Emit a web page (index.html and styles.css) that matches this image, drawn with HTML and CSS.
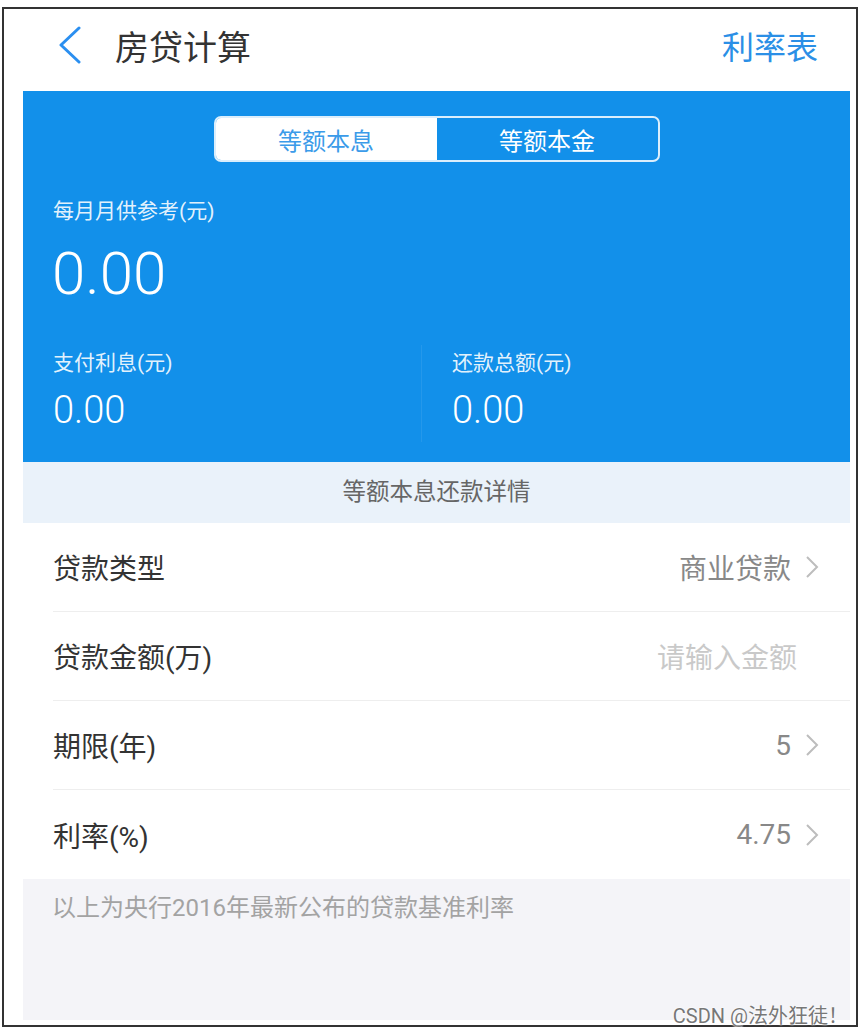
FILE: index.html
```html
<!DOCTYPE html>
<html>
	<head>
		<meta charset="UTF-8">
		<title>房贷计算</title>
		<link rel="stylesheet" href="styles.css">
	</head>
	<body>
		<div class="phone">
			<div class="page">
				<div class="header">
					<a href="#" class="back">
						<svg width="24" height="38" viewBox="0 0 24 38"><polyline points="21,2 3,19 21,36" fill="none" stroke="#2b8ff0" stroke-width="3" stroke-linecap="round" stroke-linejoin="round"/></svg>
					</a>
					<div class="title">房贷计算</div>
					<a href="#" class="rate-link">利率表</a>
				</div>

				<div class="result">
					<div class="tabs">
						<a href="#" class="tab active">等额本息</a>
						<a href="#" class="tab">等额本金</a>
					</div>
					<div class="label">每月月供参考(元)</div>
					<div class="big-num">0.00</div>
					<div class="stats">
						<div class="stat stat-left">
							<div class="label">支付利息(元)</div>
							<div class="num">0.00</div>
						</div>
						<div class="stat stat-right">
							<div class="label">还款总额(元)</div>
							<div class="num">0.00</div>
						</div>
					</div>
				</div>

				<div class="detail">等额本息还款详情</div>

				<ul class="form">
					<li class="row">
						<span class="row-name">贷款类型</span>
						<span class="row-value">商业贷款</span>
						<svg class="arrow" width="14" height="24" viewBox="0 0 14 24"><polyline points="2,2 12,12 2,22" fill="none" stroke="#bdbdbd" stroke-width="2"/></svg>
					</li>
					<li class="row">
						<span class="row-name">贷款金额(万)</span>
						<span class="row-value placeholder">请输入金额</span>
					</li>
					<li class="row">
						<span class="row-name">期限(年)</span>
						<span class="row-value">5</span>
						<svg class="arrow" width="14" height="24" viewBox="0 0 14 24"><polyline points="2,2 12,12 2,22" fill="none" stroke="#bdbdbd" stroke-width="2"/></svg>
					</li>
					<li class="row">
						<span class="row-name">利率(%)</span>
						<span class="row-value">4.75</span>
						<svg class="arrow" width="14" height="24" viewBox="0 0 14 24"><polyline points="2,2 12,12 2,22" fill="none" stroke="#bdbdbd" stroke-width="2"/></svg>
					</li>
				</ul>

				<div class="tip">以上为央行2016年最新公布的贷款基准利率</div>
			</div>
			<div class="mark">CSDN @法外狂徒！</div>
		</div>
	</body>
</html>
```

FILE: styles.css
```css
*{
	padding: 0;
	margin: 0;
	box-sizing: border-box;
}
body{
	font-family: Roboto, "Noto Sans CJK SC", sans-serif;
	background: #fff;
}
a{
	text-decoration: none;
}
.phone{
	position: relative;
	width: 856px;
	height: 1020px;
	margin: 7px 0 0 2px;
	border: 2px solid #333;
	padding: 0 6px 5px 19px;
	background: #fff;
}
.page{
	display: flex;
	flex-direction: column;
	height: 100%;
}
.header{
	height: 82px;
	display: flex;
	align-items: center;
	padding: 0 32px 10px 35px;
}
.back{
	display: flex;
	width: 24px;
}
.title{
	margin-left: 33px;
	font-size: 34px;
	color: #333;
	flex: 1;
}
.rate-link{
	font-size: 32px;
	color: #2b8fe6;
}
.result{
	background: #1290ea;
	color: #fff;
	padding: 25px 0 20px;
}
.tabs{
	display: flex;
	width: 446px;
	height: 46px;
	margin: 0 auto;
	border: 2px solid rgba(255,255,255,0.85);
	border-radius: 7px;
	overflow: hidden;
}
.tab{
	flex: 1;
	display: flex;
	align-items: center;
	justify-content: center;
	font-size: 24px;
	color: #fff;
}
.tab.active{
	background: #fff;
	color: #3b9be9;
}
.result .label{
	font-size: 21px;
	line-height: 28px;
	color: rgba(255,255,255,0.9);
}
.result > .label{
	margin: 35px 0 0 30px;
}
.big-num{
	margin: 20px 0 0 29px;
	font-size: 60px;
	line-height: 58px;
	font-weight: 300;
}
.stats{
	display: flex;
	margin-top: 42px;
}
.stat{
	padding: 4px 0 13px;
}
.stat-left{
	width: 399px;
	padding-left: 30px;
	border-right: 1px solid rgba(255,255,255,0.08);
}
.stat-right{
	flex: 1;
	padding-left: 30px;
}
.num{
	margin-top: 14px;
	font-size: 38px;
	line-height: 38px;
	font-weight: 300;
}
.detail{
	height: 61px;
	line-height: 61px;
	background: #eaf2fa;
	text-align: center;
	font-size: 23.5px;
	color: #666;
}
.form{
	list-style: none;
}
.row{
	height: 89px;
	margin-left: 30px;
	padding-right: 31px;
	display: flex;
	align-items: center;
	border-bottom: 1px solid #eee;
	font-size: 28px;
}
.row:last-child{
	border-bottom: none;
}
.row-name{
	flex: 1;
	color: #333;
}
.row-value{
	color: #888;
	margin-right: 14px;
}
.row-value.placeholder{
	color: #c9c9c9;
	margin-right: 22px;
}
.arrow{
	display: block;
}
.tip{
	flex: 1;
	background: #f4f4f8;
	padding: 14px 0 0 29px;
	font-size: 24px;
	line-height: 30px;
	color: #a3a3a3;
}
.mark{
	position: absolute;
	right: 8px;
	bottom: -4px;
	font-size: 20px;
	color: #777;
	text-shadow: 0 0 2px #fff, 0 0 2px #fff;
}
```
